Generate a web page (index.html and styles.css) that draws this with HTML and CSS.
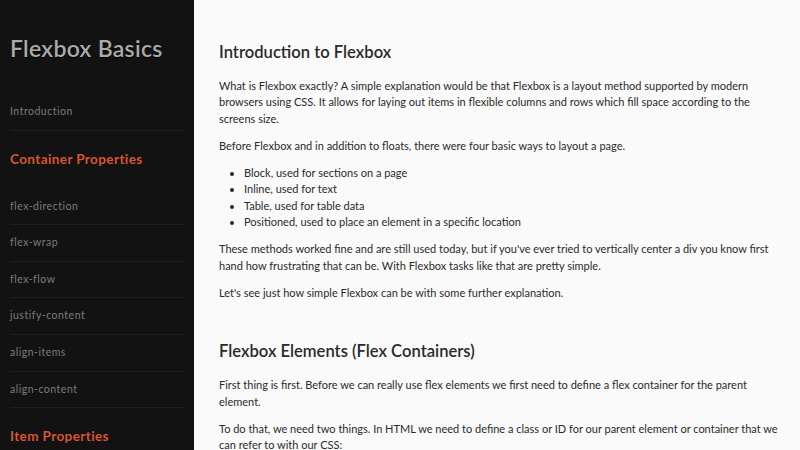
FILE: index.html
```html
<!DOCTYPE html>
<html lang="en">
<head>
<meta charset="utf-8">
<title>Flexbox Basics</title>
<link rel="stylesheet" href="styles.css">
</head>
<body>
<div class="page">
  <nav class="sidebar">
    <h1 class="brand">Flexbox Basics</h1>
    <ul class="nav">
      <li class="nav-item">Introduction</li>
    </ul>
    <h2 class="nav-head">Container Properties</h2>
    <ul class="nav">
      <li class="nav-item">flex-direction</li>
      <li class="nav-item">flex-wrap</li>
      <li class="nav-item">flex-flow</li>
      <li class="nav-item">justify-content</li>
      <li class="nav-item">align-items</li>
      <li class="nav-item">align-content</li>
    </ul>
    <h2 class="nav-head">Item Properties</h2>
  </nav>
  <main class="content">
    <section class="section">
      <h2 class="title">Introduction to Flexbox</h2>
      <p>What is Flexbox exactly? A simple explanation would be that Flexbox is a layout method supported by modern browsers using CSS. It allows for laying out items in flexible columns and rows which fill space according to the screens size.</p>
      <p>Before Flexbox and in addition to floats, there were four basic ways to layout a page.</p>
      <ul class="list">
        <li>Block, used for sections on a page</li>
        <li>Inline, used for text</li>
        <li>Table, used for table data</li>
        <li>Positioned, used to place an element in a specific location</li>
      </ul>
      <p>These methods worked fine and are still used today, but if you've ever tried to vertically center a div you know first hand how frustrating that can be. With Flexbox tasks like that are pretty simple.</p>
      <p>Let's see just how simple Flexbox can be with some further explanation.</p>
    </section>
    <section class="section">
      <h2 class="title">Flexbox Elements (Flex Containers)</h2>
      <p>First thing is first. Before we can really use flex elements we first need to define a flex container for the parent element.</p>
      <p>To do that, we need two things. In HTML we need to define a class or ID for our parent element or container that we can refer to with our CSS:</p>
    </section>
  </main>
</div>
</body>
</html>
```
FILE: styles.css
```css
* { box-sizing: border-box; }
html, body { margin: 0; padding: 0; height: 100%; overflow: hidden; }
body {
  font-family: "Lato", "Open Sans", sans-serif;
  background: #fafafa;
}
.page {
  display: flex;
  height: 450px;
}
.sidebar {
  width: 194px;
  flex: none;
  background: #121212;
  padding: 0 10px;
}
.brand {
  margin: 0;
  padding: 33px 0 0;
  height: 94px;
  font-size: 23px;
  font-weight: 600;
  color: #ababab;
  letter-spacing: 0.3px;
  line-height: 30px;
  text-shadow: 0 1px 1px #000;
}
.nav {
  list-style: none;
  margin: 0;
  padding: 0;
}
.nav-item {
  font-size: 10.5px;
  letter-spacing: 0.5px;
  color: #7c7c7c;
  line-height: 13.6px;
  padding: 11px 0;
  border-bottom: 1px solid #1e1e1e;
}
.nav-head {
  margin: 0;
  font-size: 13.5px;
  font-weight: 700;
  letter-spacing: 0.4px;
  color: #d9552f;
  line-height: 20px;
  padding: 18px 0 20px;
}
.content {
  flex: 1;
  padding: 0 17px 0 25px;
  color: #2a2a2a;
  font-size: 11px;
  line-height: 16.3px;
}
.section { padding-top: 40px; }
.section + .section { padding-top: 27px; }
.title {
  margin: 0 0 14px;
  font-size: 16.6px;
  font-weight: 600;
  line-height: 24px;
  color: #2a2a2a;
}
.content p { margin: 0 0 11px; }
.list {
  margin: 0 0 11px;
  padding-left: 25px;
}
```
